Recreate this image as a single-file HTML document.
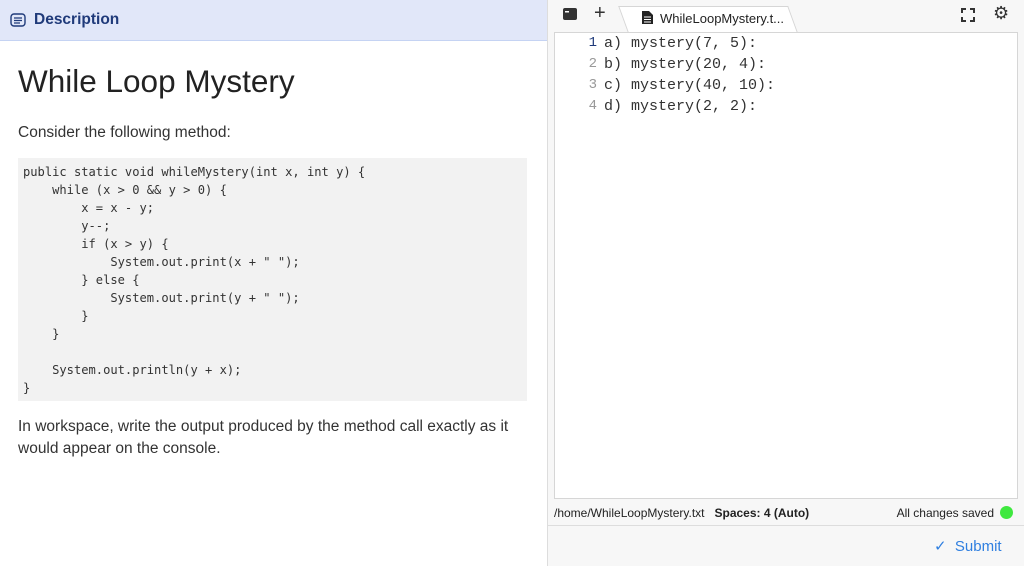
<!DOCTYPE html>
<html><head><style>
*{box-sizing:border-box;margin:0;padding:0}
body{width:1024px;height:566px;overflow:hidden;font-family:"Liberation Sans","DejaVu Sans",sans-serif;background:#fff;position:relative}
#left{position:absolute;left:0;top:0;width:547px;height:566px;background:#fff}
#hdr{height:41px;background:#e1e7f9;border-bottom:1px solid #c5d3f3;display:flex;align-items:center;padding-left:10px;color:#1f3a7a;font-weight:bold;font-size:15.5px}
h1{position:absolute;left:18px;top:63px;font-weight:normal;font-size:31.5px;color:#222;font-family:"Liberation Sans",sans-serif}
.p{position:absolute;left:18px;font-size:15.5px;color:#333;line-height:22px;width:510px}
pre{position:absolute;left:18px;top:158px;width:509px;height:243px;background:#f2f2f2;font-family:"DejaVu Sans Mono",monospace;font-size:12.1px;line-height:18px;padding:5px 0 0 5px;color:#333}
#right{position:absolute;left:547px;top:0;width:477px;height:566px;background:#f7f7f7;border-left:1px solid #ddd}
#ed{position:absolute;left:6px;top:32px;width:464px;height:467px;background:#fff;border:1px solid #d6d6d6}
.ln{position:absolute;font-family:"Liberation Mono",monospace;font-size:15px;line-height:21px;color:#333}
.num{position:absolute;left:22px;width:20px;text-align:right;font-family:"Liberation Mono",monospace;font-size:14px;line-height:21px;color:#999}
#tab{position:absolute;left:80px;top:6px;width:170px;height:27px;background:#fff;border:1px solid #d6d6d6;border-bottom:none;transform:skewX(20deg);transform-origin:bottom left}
</style></head><body>
<div id="left">
<div id="hdr"><svg width="16" height="14" viewBox="0 0 16 14" style="margin-right:8px"><rect x="1" y="1" width="14" height="12" rx="3" fill="none" stroke="#1f3a7a" stroke-width="1.4"/><path d="M4 5h8M4 7.5h8M4 10h6" stroke="#1f3a7a" stroke-width="1.2"/></svg>Description</div>
<h1>While Loop Mystery</h1>
<div class="p" style="top:122px">Consider the following method:</div>
<pre>public static void whileMystery(int x, int y) {
    while (x &gt; 0 &amp;&amp; y &gt; 0) {
        x = x - y;
        y--;
        if (x &gt; y) {
            System.out.print(x + " ");
        } else {
            System.out.print(y + " ");
        }
    }

    System.out.println(y + x);
}</pre>
<div class="p" style="top:416px">In workspace, write the output produced by the method call exactly as it would appear on the console.</div>
</div>
<div id="right">
<svg style="position:absolute;left:15px;top:8px" width="14" height="13"><rect x="0" y="0" width="14" height="12" rx="2" fill="#333"/><rect x="2" y="3" width="4" height="1.5" fill="#fff"/></svg>
<div style="position:absolute;left:46px;top:2px;font-size:20px;color:#333">+</div>
<div id="tab"></div>
<svg style="position:absolute;left:94px;top:11px" width="11" height="13"><path d="M0 0h7l4 4v9H0z" fill="#222"/><path d="M2 6h7M2 8.5h7M2 11h7" stroke="#fff" stroke-width="1"/></svg>
<div style="position:absolute;left:112px;top:11px;font-size:13px;color:#222">WhileLoopMystery.t...</div>
<svg style="position:absolute;left:413px;top:8px" width="14" height="14" fill="none" stroke="#333" stroke-width="2"><path d="M1 5V1h4M9 1h4v4M13 9v4H9M5 13H1V9"/></svg>
<div style="position:absolute;left:445px;top:3px;font-size:18px;color:#333">⚙</div>
<div id="ed">
<div class="num" style="top:0;color:#1f3a7a">1</div>
<div class="num" style="top:21px">2</div>
<div class="num" style="top:42px">3</div>
<div class="num" style="top:63px">4</div>
<div class="ln" style="left:49px;top:0">a) mystery(7, 5):</div>
<div class="ln" style="left:49px;top:21px">b) mystery(20, 4):</div>
<div class="ln" style="left:49px;top:42px">c) mystery(40, 10):</div>
<div class="ln" style="left:49px;top:63px">d) mystery(2, 2):</div>
</div>
<div style="position:absolute;left:6px;top:506px;font-size:12px;color:#222">/home/WhileLoopMystery.txt &nbsp; <b>Spaces: 4 (Auto)</b></div>
<div style="position:absolute;right:30px;top:506px;font-size:12px;color:#222">All changes saved</div>
<div style="position:absolute;left:452px;top:506px;width:13px;height:13px;border-radius:50%;background:#3fe83f"></div>
<div style="position:absolute;left:0;top:525px;width:477px;border-top:1px solid #ddd"></div>
<div style="position:absolute;left:386px;top:537px;font-size:15px;color:#2f7fe0">✓&nbsp;&nbsp;Submit</div>
</div>
</body></html>
